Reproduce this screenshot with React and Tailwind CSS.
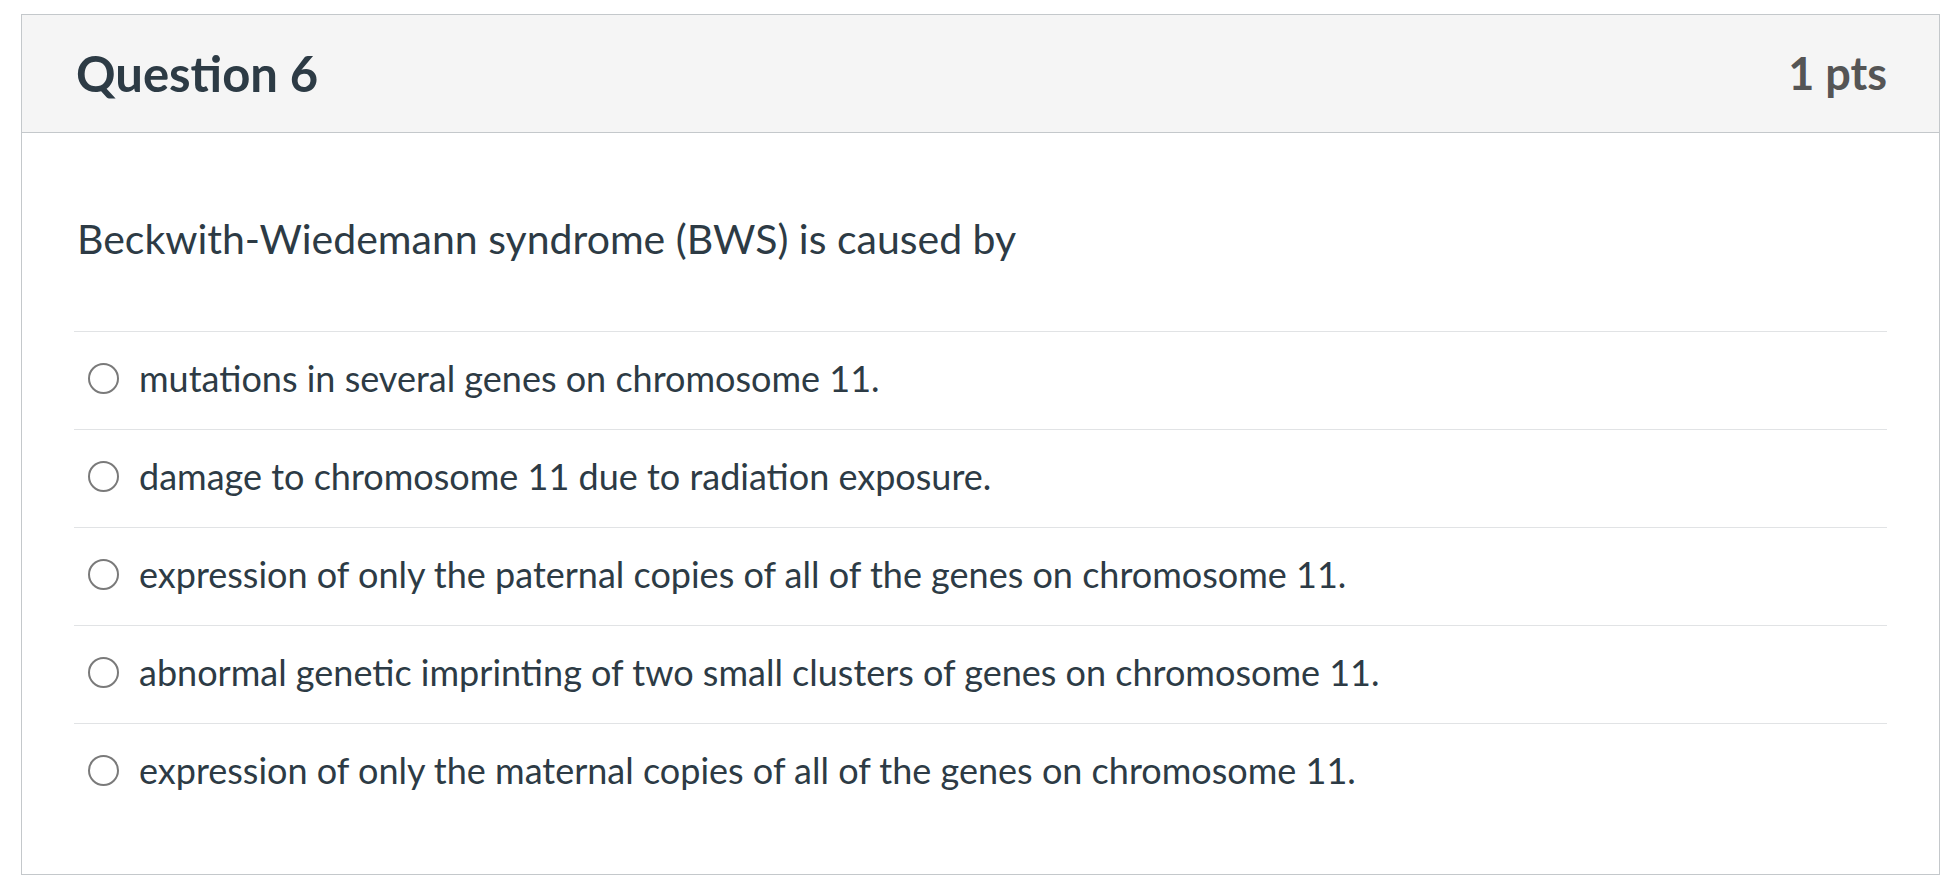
import React from "react";

const answers = [
  "mutations in several genes on chromosome 11.",
  "damage to chromosome 11 due to radiation exposure.",
  "expression of only the paternal copies of all of the genes on chromosome 11.",
  "abnormal genetic imprinting of two small clusters of genes on chromosome 11.",
  "expression of only the maternal copies of all of the genes on chromosome 11.",
];

export default function App() {
  return (
    <div className="w-[1944px] h-[892px] bg-white pt-[14px] pl-[21px] font-['Lato','Open_Sans',sans-serif]">
      <div className="w-[1919px] h-[861px] border border-[#c4c8cb] flex flex-col">
        <div className="h-[118px] shrink-0 bg-[#f5f5f5] border-b border-[#c4c8cb] flex items-center justify-between pl-[54px] pr-[52px]">
          <h2 className="text-[49px] font-bold text-[#2d3b45] leading-none">Question 6</h2>
          <div className="text-[45px] font-bold text-[#555555] leading-none">1 pts</div>
        </div>
        <div className="px-[52px] pt-[76px]">
          <p className="text-[41px] leading-[60px] text-[#2d3b45] pl-[3px] mb-[62px]">
            Beckwith-Wiedemann syndrome (BWS) is caused by
          </p>
          <div>
            {answers.map((a, i) => (
              <div
                key={i}
                className="h-[98px] border-t border-[#e1e3e5] flex items-center pl-[14px] pb-[5px]"
              >
                <span className="w-[31px] h-[31px] rounded-full border-[2px] border-[#7a7a7a] bg-white shrink-0"></span>
                <span className="ml-[20px] text-[36px] text-[#2d3b45]">{a}</span>
              </div>
            ))}
          </div>
        </div>
      </div>
    </div>
  );
}
